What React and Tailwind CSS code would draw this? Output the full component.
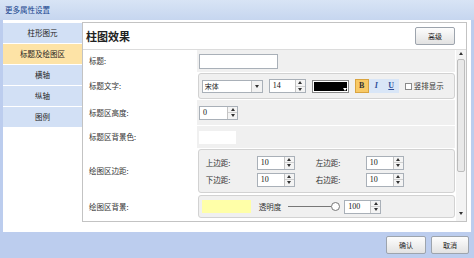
import React from "react";

const cjk = { fontFamily: '"Noto Sans CJK SC", "Liberation Sans", sans-serif' };
const num = { fontFamily: '"Liberation Serif", "Noto Sans CJK SC", serif' };

const UpTri = () => (
  <div className="w-0 h-0 border-x-[2px] border-x-transparent border-b-[3px] border-b-[#333]" />
);
const DownTri = () => (
  <div className="w-0 h-0 border-x-[2px] border-x-transparent border-t-[3px] border-t-[#333]" />
);

const Spinner = ({ value, width = "w-[38px]" }) => (
  <div className={`flex h-[14px] ${width} border border-[#a9b0b8] bg-white`}>
    <span className="flex-1 pl-[3px] text-[8px] leading-[12px] text-[#111]" style={num}>
      {value}
    </span>
    <div className="w-[10px] flex flex-col border-l border-[#c4c4c4] bg-[#f4f4f4]">
      <div className="flex-1 flex items-center justify-center border-b border-[#d0d0d0]">
        <UpTri />
      </div>
      <div className="flex-1 flex items-center justify-center">
        <DownTri />
      </div>
    </div>
  </div>
);

const Btn = ({ children, w }) => (
  <button
    className={`${w} h-[18px] rounded-[2px] border border-[#9da4ad] bg-linear-to-b from-[#fdfdfd] to-[#e2e2e2] text-[7px] text-[#222] flex items-center justify-center`}
    style={cjk}
  >
    {children}
  </button>
);

const Row = ({ label, h, children, boxed, gap = "mb-[1px]" }) => (
  <div className={`flex ${gap}`} style={{ height: h }}>
    <div className="w-[114px] flex items-center pl-[6px] bg-white text-[7.5px] text-[#333]">
      {label}
    </div>
    <div
      className={`w-[258px] flex items-center bg-[#f0f0f0] ${
        boxed ? "border border-[#d2d2d2] rounded-[3px] ml-[1px] w-[257px]" : "pl-[2px]"
      }`}
    >
      {children}
    </div>
  </div>
);

const navItems = ["柱形图元", "标题及绘图区", "横轴", "纵轴", "图例"];

export default function App() {
  return (
    <div className="w-[474px] h-[258px] bg-[#bccdee] flex flex-col overflow-hidden" style={cjk}>
      {/* title bar */}
      <div className="h-[20px] flex items-center px-[5px] bg-linear-to-b from-[#d8e4f5] to-[#c6d6ef] text-[7.5px] text-[#15428b]">
        更多属性设置
      </div>

      {/* body */}
      <div className="mx-[3px] h-[212px] bg-white flex">
        {/* nav */}
        <div className="w-[79px] pt-[3px] flex flex-col">
          {navItems.map((item, i) => (
            <div
              key={item}
              className={`h-[20px] mb-[1px] flex items-center justify-center text-[7.5px] text-[#222] ${
                i === 1 ? "bg-[#fde3a6]" : "bg-[#d2e0f5]"
              }`}
            >
              {item}
            </div>
          ))}
        </div>

        {/* panel */}
        <div className="mt-[2px] w-[385px] h-[200px] border border-[#c3c3c3] flex flex-col">
          <div className="h-[27px] flex items-center justify-between border-b border-[#dcdcdc] pl-[3px] pr-[11px]">
            <span className="text-[11px] font-bold text-[#222]">柱图效果</span>
            <Btn w="w-[40px]">高级</Btn>
          </div>

          <div className="flex flex-1 overflow-hidden">
            <div className="w-[372px] flex flex-col">
              <Row label="标题:" h={22}>
                <div className="w-[79px] h-[15px] bg-white border border-[#a9b0b8]" />
              </Row>

              <Row label="标题文字:" h={26} boxed>
                <div className="flex items-center pl-[3px]">
                  <div className="flex w-[61px] h-[13px] border border-[#a9b0b8] bg-white">
                    <span className="flex-1 pl-[2px] text-[7px] leading-[11px] text-[#222]">宋体</span>
                    <div className="w-[11px] border-l border-[#c4c4c4] bg-[#f2f2f2] flex items-center justify-center">
                      <DownTri />
                    </div>
                  </div>
                  <div className="ml-[6px]">
                    <Spinner value="14" width="w-[37px]" />
                  </div>
                  <div className="ml-[6px] w-[37px] h-[13px] border border-[#888] p-[1px] bg-white relative">
                    <div className="w-full h-full bg-black" />
                    <div className="absolute right-[1px] bottom-[1px] w-0 h-0 border-x-[2px] border-x-transparent border-t-[3px] border-t-white" />
                  </div>
                  <div className="ml-[6px] w-[14px] h-[14px] bg-[#f8c965] border border-[#d9a440] flex items-center justify-center text-[8px] font-bold text-[#333]" style={num}>
                    B
                  </div>
                  <div className="w-[15px] h-[14px] bg-[#d9e6f7] flex items-center justify-center text-[8px] italic font-bold text-[#2f4f9a]" style={num}>
                    I
                  </div>
                  <div className="w-[15px] h-[14px] bg-[#d9e6f7] flex items-center justify-center text-[8px] underline font-bold text-[#2f4f9a]" style={num}>
                    U
                  </div>
                  <div className="ml-[6px] w-[7px] h-[7px] border border-[#8a8a8a] bg-white" />
                  <span className="ml-[2px] text-[7.5px] text-[#333]">竖排显示</span>
                </div>
              </Row>

              <Row label="标题区高度:" h={25}>
                <Spinner value="0" width="w-[39px]" />
              </Row>

              <Row label="标题区背景色:" h={22}>
                <div className="w-[37px] h-[13px] bg-white" />
              </Row>

              <Row label="绘图区边距:" h={44} boxed gap="mb-[2px]">
                <div className="flex flex-col gap-[3px] w-full">
                  {[
                    ["上边距:", "左边距:"],
                    ["下边距:", "右边距:"],
                  ].map(([a, b]) => (
                    <div key={a} className="flex items-center text-[7.5px] text-[#333]">
                      <span className="ml-[7px] w-[51px]">{a}</span>
                      <Spinner value="10" />
                      <span className="ml-[21px] w-[50px]">{b}</span>
                      <Spinner value="10" />
                    </div>
                  ))}
                </div>
              </Row>

              <Row label="绘图区背景:" h={23} boxed>
                <div className="flex items-center pl-[3px]">
                  <div className="w-[49px] h-[13px] bg-[#ffffa8]" />
                  <span className="ml-[8px] text-[7.5px] text-[#333]">透明度</span>
                  <div className="ml-[7px] w-[43px] h-[1px] bg-[#777]" />
                  <div className="w-[9px] h-[9px] rounded-full border border-[#777] bg-white" />
                  <div className="ml-[4px]">
                    <Spinner value="100" width="w-[37px]" />
                  </div>
                </div>
              </Row>
            </div>

            {/* scrollbar */}
            <div className="ml-[1px] w-[10px] bg-[#f3f3f3] flex flex-col items-center pt-[2px] pb-[6px]">
              <UpTri />
              <div className="mt-[4px] w-[8px] h-[113px] rounded-[2px] border border-[#bdbdbd] bg-[#e9e9e9]" />
              <div className="flex-1" />
              <DownTri />
            </div>
          </div>
        </div>
      </div>

      {/* footer */}
      <div className="flex-1 flex items-center justify-end gap-[5px] pr-[5px]">
        <Btn w="w-[40px]">确认</Btn>
        <Btn w="w-[38px]">取消</Btn>
      </div>
    </div>
  );
}
